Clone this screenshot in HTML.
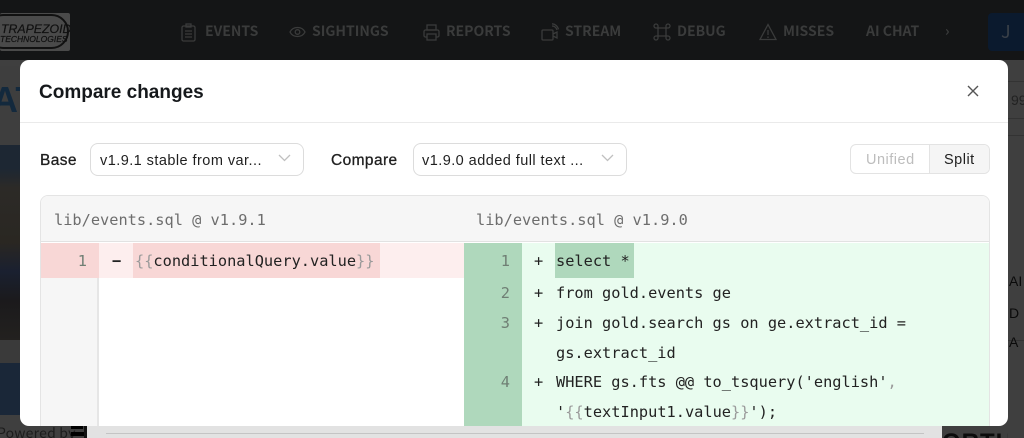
<!DOCTYPE html>
<html><head><meta charset="utf-8"><style>
html,body{margin:0;padding:0;width:1024px;height:438px;overflow:hidden;background:#3f3f3f}
div,span{position:absolute;white-space:nowrap;box-sizing:border-box}
.nav{font:600 14px/20px "Noto Sans CJK SC","Liberation Sans",sans-serif;color:#3a3b3b;top:21px}
.ui{font-family:"Liberation Sans",sans-serif;font-size:14px;color:#1f1f1f}
.lb{font-size:15.5px;letter-spacing:.4px;-webkit-text-stroke:.3px #1f1f1f;line-height:18px;top:92px}
.sel{font-size:14.5px;letter-spacing:.45px;line-height:18px;top:92px}
.m{font-family:"DejaVu Sans Mono","Liberation Mono",monospace;font-size:15.3px;line-height:20px;color:#222}
.n{color:#6f7f74;text-align:right;width:30px}
.g{color:#9a9a9a;position:static}
svg{position:absolute;fill:none;stroke:#3a3b3b;stroke-width:1.3}
</style></head><body>
<div style="left:0;top:0;width:1024px;height:60px;background:#141516"></div>
<div style="left:0;top:13px;width:70px;height:38px;background:#4a4a4a;border-radius:2px;overflow:hidden">
<div style="left:-14px;top:1px;width:83px;height:35px;border:2px solid #111;border-radius:18px"></div>
<div style="left:1px;top:9px;font:italic 12.300px/14px 'Liberation Sans',sans-serif;color:#111;-webkit-text-stroke:.2px #111">TRAPEZOID</div>
<div style="left:0;top:21px;font:italic 8.500px/10px 'Liberation Sans',sans-serif;color:#111;-webkit-text-stroke:.2px #111">TECHNOLOGIES</div></div>
<svg style="left:181px;top:23px" width="16" height="19" viewBox="0 0 16 19"><rect x="1" y="3" width="13" height="15" rx="1.5"/><rect x="5" y="1" width="5" height="3"/><path d="M4 8h7M4 11h7M4 14h7"/></svg>
<div class="nav" style="left:205px">EVENTS</div>
<svg style="left:289px;top:25px" width="17" height="14" viewBox="0 0 17 14" stroke-width="1.5"><path d="M1 7c3-6 12-6 15 0c-3 6-12 6-15 0z"/><circle cx="8.500" cy="7" r="2.300"/></svg>
<div class="nav" style="left:312px">SIGHTINGS</div>
<svg style="left:423px;top:24px" width="17" height="17" viewBox="0 0 17 17"><rect x="4" y="1" width="9" height="5"/><rect x="1" y="6" width="15" height="7" rx="1.500"/><rect x="4" y="10" width="9" height="6" fill="#141516"/></svg>
<div class="nav" style="left:446px">REPORTS</div>
<svg style="left:541px;top:23px" width="18" height="18" viewBox="0 0 18 18"><rect x="1" y="7" width="11" height="10" rx="1"/><path d="M12 11l4-2v6l-4-2M11 3a5 5 0 0 1 5 4M11 0.800a7 7 0 0 1 6.500 5.500"/></svg>
<div class="nav" style="left:565px">STREAM</div>
<svg style="left:653px;top:23px" width="18" height="18" viewBox="0 0 18 18"><path d="M5 5h8v8H5zM5 5H3a2 2 0 1 1 2-2zM13 5V3a2 2 0 1 1 2 2zM13 13h2a2 2 0 1 1-2 2zM5 13v2a2 2 0 1 1-2-2z"/></svg>
<div class="nav" style="left:677px">DEBUG</div>
<svg style="left:759px;top:23px" width="18" height="18" viewBox="0 0 18 18"><path d="M9 1.500L1 16.500h16zM9 7v5M9 13.500v1.500"/></svg>
<div class="nav" style="left:783px">MISSES</div>
<div class="nav" style="left:866px">AI CHAT</div>
<div class="nav" style="left:945px;font-size:14px">›</div>
<div style="left:988px;top:13px;width:36px;height:38px;background:#0b1a2e;border-radius:4px 0 0 4px"></div>
<div class="nav" style="left:1001px;top:21px;font-size:18px;font-weight:400;color:#3a4048">J</div>

<div style="left:0;top:66px;width:22px;height:79px;background:#3e3e3e;overflow:hidden"><div style="left:-8px;top:14px;font:700 36px/40px 'Liberation Sans',sans-serif;color:#13293d">AT</div></div>
<div style="left:0;top:145px;width:22px;height:195px;background:linear-gradient(180deg,#1d2733 0,#1d2733 12%,#2c2a27 22%,#2a2722 50%,#1a2030 65%,#1b1a1c 80%,#23211f 100%)"></div>
<div style="left:0;top:340px;width:22px;height:23px;background:#3a3a3a"></div>
<div style="left:0;top:363px;width:22px;height:52px;background:#1a2738"></div>
<div style="left:0;top:415px;width:87px;height:23px;background:#3f3f3f;overflow:hidden"><div style="left:-3px;top:8px;font:14px/20px 'Noto Sans CJK SC','Liberation Sans',sans-serif;letter-spacing:.2px;color:#1c1c1c">Powered by</div><div style="left:71px;top:11px;width:12px;height:3px;background:#000"></div><div style="left:71px;top:17px;width:13px;height:4px;background:#000"></div><div style="left:84px;top:11px;width:3px;height:12px;background:#111"></div></div>
<div style="left:87px;top:426px;width:855px;height:12px;background:#e2e2e2"></div>
<div style="left:106px;top:433px;width:818px;height:1px;background:#c4c4c4"></div>
<div style="left:942px;top:426px;width:82px;height:12px;background:#3f3f3f;overflow:hidden"><div style="left:0;top:3px;font:700 24px/28px 'Liberation Sans',sans-serif;letter-spacing:1px;color:#0c0c0c">ORTH</div></div>
<div style="left:1008px;top:60px;width:16px;height:378px;background:#3f3f3f"></div>
<div style="left:1008px;top:81px;width:16px;height:1px;background:#333"></div>
<div style="left:1008px;top:118px;width:16px;height:1px;background:#333"></div>
<div style="left:1008px;top:135px;width:16px;height:1px;background:#333"></div>
<div style="left:1008px;top:340px;width:16px;height:1px;background:#333"></div>
<div style="left:1011px;top:91px;font:14px/18px 'Liberation Sans',sans-serif;color:#222">99</div>
<div style="left:1009px;top:272px;font:14px/18px 'Liberation Sans',sans-serif;color:#0a0a0a">AI</div>
<div style="left:1009px;top:304px;font:14px/18px 'Liberation Sans',sans-serif;color:#0a0a0a">D</div>
<div style="left:1009px;top:333px;font:14px/18px 'Liberation Sans',sans-serif;color:#0a0a0a">A</div>

<div style="left:20px;top:60px;width:988px;height:366px;background:#fff;border-radius:9px;overflow:hidden">
<div style="left:19px;top:21px;font:700 19px/24px 'Liberation Sans',sans-serif;color:#15181b">Compare changes</div>
<svg style="left:947px;top:25px;stroke:#555;stroke-width:1.4" width="12" height="12" viewBox="0 0 12 12"><path d="M1 1l10 10M11 1L1 11"/></svg>
<div style="left:0;top:62px;width:988px;height:1px;background:#eaeaea"></div>

<div class="ui lb" style="left:20px">Base</div>
<div style="left:70px;top:83px;width:214px;height:33px;border:1px solid #dcdcdc;border-radius:8px"></div>
<div class="ui sel" style="left:80px">v1.9.1 stable from var...</div>
<svg style="left:258px;top:94px;stroke:#c0c0c0" width="13" height="8" viewBox="0 0 13 8"><path d="M1 1l5.500 5.500L12 1"/></svg>
<div class="ui lb" style="left:311px">Compare</div>
<div style="left:393px;top:83px;width:214px;height:33px;border:1px solid #dcdcdc;border-radius:8px"></div>
<div class="ui sel" style="left:402px">v1.9.0 added full text ...</div>
<svg style="left:581px;top:94px;stroke:#c0c0c0" width="13" height="8" viewBox="0 0 13 8"><path d="M1 1l5.500 5.500L12 1"/></svg>

<div style="left:830px;top:84px;width:140px;height:30px;border:1px solid #e3e3e3;border-radius:6px;overflow:hidden"><div style="left:78px;top:0;width:62px;height:30px;background:#f5f5f5;border-left:1px solid #e3e3e3"></div></div>
<div class="ui" style="left:846px;top:91px;line-height:18px;color:#bdbdbd;font-size:14.500px;letter-spacing:.5px">Unified</div>
<div class="ui" style="left:924px;top:91px;line-height:18px;font-size:14.500px;letter-spacing:.5px">Split</div>

<div style="left:20px;top:135px;width:950px;height:240px;border:1px solid #e4e4e4;border-radius:8px 8px 0 0;overflow:hidden;background:#fff">
<div style="left:0;top:0;width:948px;height:46px;background:#f6f6f6;border-bottom:1px solid #e2e2e2"></div>
<div class="m" style="left:13px;top:14px;color:#6d6d6d">lib/events.sql @ v1.9.1</div>
<div class="m" style="left:435px;top:14px;color:#6d6d6d">lib/events.sql @ v1.9.0</div>
<div style="left:0;top:47px;width:58px;height:193px;background:#f6f6f6;border-right:2px solid #e6e6e6"></div>
<div style="left:0;top:47px;width:58px;height:35px;background:#f8d7d6"></div>
<div style="left:58px;top:47px;width:365px;height:35px;background:#fdeeee"></div>
<div style="left:92px;top:47px;width:247px;height:35px;background:#f8d7d6"></div>
<div style="left:423px;top:47px;width:58px;height:193px;background:#afd8bc"></div>
<div style="left:481px;top:47px;width:467px;height:193px;background:#e9fcef"></div>
<div style="left:514px;top:47px;width:79px;height:35px;background:#afd8bc"></div>

<div class="m n" style="left:16px;top:55px">1</div>
<div class="m" style="left:71px;top:55px;font-weight:700">−</div>
<div class="m" style="left:94px;top:55px"><span class="g">{{</span>conditionalQuery.value<span class="g">}}</span></div>

<div class="m n" style="left:439px;top:55px">1</div>
<div class="m n" style="left:439px;top:87px">2</div>
<div class="m n" style="left:439px;top:117px">3</div>
<div class="m n" style="left:439px;top:176px">4</div>
<div class="m" style="left:493px;top:55px">+</div>
<div class="m" style="left:493px;top:87px">+</div>
<div class="m" style="left:493px;top:117px">+</div>
<div class="m" style="left:493px;top:176px">+</div>
<div class="m" style="left:515px;top:55px">select *</div>
<div class="m" style="left:515px;top:87px">from gold.events ge</div>
<div class="m" style="left:515px;top:117px">join gold.search gs on ge.extract_id =</div>
<div class="m" style="left:515px;top:147px">gs.extract_id</div>
<div class="m" style="left:515px;top:176px">WHERE gs.fts @@ to_tsquery('english'<span class="g">,</span></div>
<div class="m" style="left:515px;top:206px">'<span class="g">{{</span>textInput1.value<span class="g">}}</span>');</div>
</div>
</div>
</body></html>
